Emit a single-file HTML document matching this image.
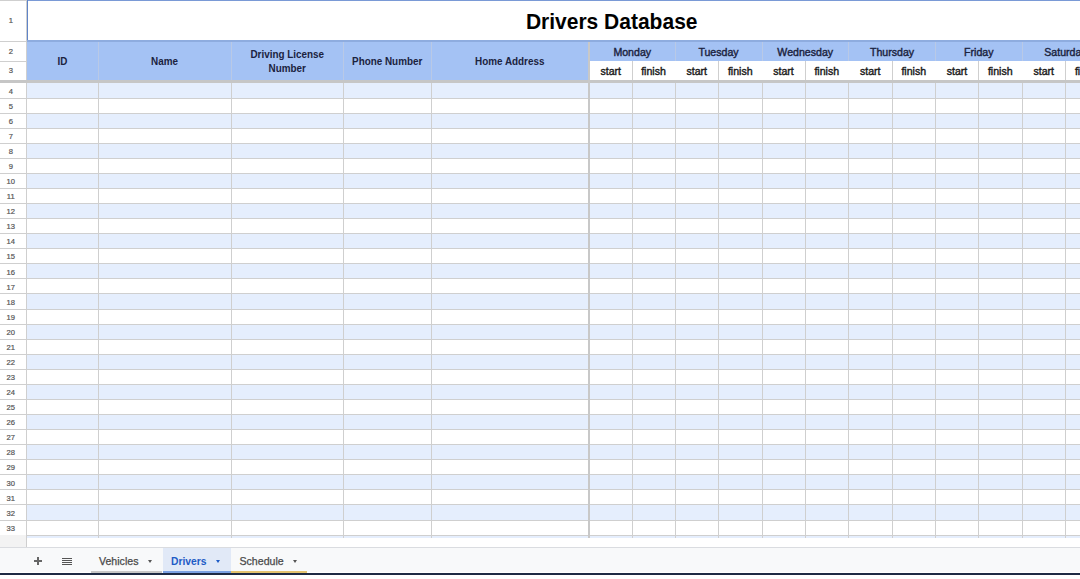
<!DOCTYPE html>
<html><head><meta charset="utf-8"><style>
html,body{margin:0;padding:0;}
body{width:1080px;height:579px;overflow:hidden;position:relative;background:#fff;font-family:"Liberation Sans", sans-serif;}
body>div{position:absolute;box-sizing:border-box;}
.t{white-space:nowrap;overflow:visible;}
</style></head><body>
<div style="left:27px;top:83px;width:1053px;height:15.07px;background:#e5eefd"></div>
<div style="left:27px;top:113.14px;width:1053px;height:15.07px;background:#e5eefd"></div>
<div style="left:27px;top:143.28px;width:1053px;height:15.07px;background:#e5eefd"></div>
<div style="left:27px;top:173.42px;width:1053px;height:15.07px;background:#e5eefd"></div>
<div style="left:27px;top:203.56px;width:1053px;height:15.07px;background:#e5eefd"></div>
<div style="left:27px;top:233.7px;width:1053px;height:15.07px;background:#e5eefd"></div>
<div style="left:27px;top:263.84px;width:1053px;height:15.07px;background:#e5eefd"></div>
<div style="left:27px;top:293.98px;width:1053px;height:15.07px;background:#e5eefd"></div>
<div style="left:27px;top:324.12px;width:1053px;height:15.07px;background:#e5eefd"></div>
<div style="left:27px;top:354.26px;width:1053px;height:15.07px;background:#e5eefd"></div>
<div style="left:27px;top:384.4px;width:1053px;height:15.07px;background:#e5eefd"></div>
<div style="left:27px;top:414.54px;width:1053px;height:15.07px;background:#e5eefd"></div>
<div style="left:27px;top:444.68px;width:1053px;height:15.07px;background:#e5eefd"></div>
<div style="left:27px;top:474.82px;width:1053px;height:15.07px;background:#e5eefd"></div>
<div style="left:27px;top:504.96px;width:1053px;height:15.07px;background:#e5eefd"></div>
<div style="left:27px;top:535.1px;width:1053px;height:3.2px;background:#e5eefd"></div>
<div style="left:0px;top:97.57px;width:1080px;height:1px;background:#cfcfcf"></div>
<div style="left:0px;top:112.64px;width:1080px;height:1px;background:#cfcfcf"></div>
<div style="left:0px;top:127.71px;width:1080px;height:1px;background:#cfcfcf"></div>
<div style="left:0px;top:142.78px;width:1080px;height:1px;background:#cfcfcf"></div>
<div style="left:0px;top:157.85px;width:1080px;height:1px;background:#cfcfcf"></div>
<div style="left:0px;top:172.92px;width:1080px;height:1px;background:#cfcfcf"></div>
<div style="left:0px;top:187.99px;width:1080px;height:1px;background:#cfcfcf"></div>
<div style="left:0px;top:203.06px;width:1080px;height:1px;background:#cfcfcf"></div>
<div style="left:0px;top:218.13px;width:1080px;height:1px;background:#cfcfcf"></div>
<div style="left:0px;top:233.2px;width:1080px;height:1px;background:#cfcfcf"></div>
<div style="left:0px;top:248.27px;width:1080px;height:1px;background:#cfcfcf"></div>
<div style="left:0px;top:263.34px;width:1080px;height:1px;background:#cfcfcf"></div>
<div style="left:0px;top:278.41px;width:1080px;height:1px;background:#cfcfcf"></div>
<div style="left:0px;top:293.48px;width:1080px;height:1px;background:#cfcfcf"></div>
<div style="left:0px;top:308.55px;width:1080px;height:1px;background:#cfcfcf"></div>
<div style="left:0px;top:323.62px;width:1080px;height:1px;background:#cfcfcf"></div>
<div style="left:0px;top:338.69px;width:1080px;height:1px;background:#cfcfcf"></div>
<div style="left:0px;top:353.76px;width:1080px;height:1px;background:#cfcfcf"></div>
<div style="left:0px;top:368.83px;width:1080px;height:1px;background:#cfcfcf"></div>
<div style="left:0px;top:383.9px;width:1080px;height:1px;background:#cfcfcf"></div>
<div style="left:0px;top:398.97px;width:1080px;height:1px;background:#cfcfcf"></div>
<div style="left:0px;top:414.04px;width:1080px;height:1px;background:#cfcfcf"></div>
<div style="left:0px;top:429.11px;width:1080px;height:1px;background:#cfcfcf"></div>
<div style="left:0px;top:444.18px;width:1080px;height:1px;background:#cfcfcf"></div>
<div style="left:0px;top:459.25px;width:1080px;height:1px;background:#cfcfcf"></div>
<div style="left:0px;top:474.32px;width:1080px;height:1px;background:#cfcfcf"></div>
<div style="left:0px;top:489.39px;width:1080px;height:1px;background:#cfcfcf"></div>
<div style="left:0px;top:504.46px;width:1080px;height:1px;background:#cfcfcf"></div>
<div style="left:0px;top:519.53px;width:1080px;height:1px;background:#cfcfcf"></div>
<div style="left:0px;top:534.6px;width:1080px;height:1px;background:#cfcfcf"></div>
<div style="left:97.5px;top:41px;width:1px;height:497.3px;background:#cfcfcf"></div>
<div style="left:230.5px;top:41px;width:1px;height:497.3px;background:#cfcfcf"></div>
<div style="left:342.9px;top:41px;width:1px;height:497.3px;background:#cfcfcf"></div>
<div style="left:430.5px;top:41px;width:1px;height:497.3px;background:#cfcfcf"></div>
<div style="left:631.5px;top:61px;width:1px;height:477.3px;background:#cfcfcf"></div>
<div style="left:674.5px;top:61px;width:1px;height:477.3px;background:#cfcfcf"></div>
<div style="left:718px;top:61px;width:1px;height:477.3px;background:#cfcfcf"></div>
<div style="left:761.5px;top:61px;width:1px;height:477.3px;background:#cfcfcf"></div>
<div style="left:804.5px;top:61px;width:1px;height:477.3px;background:#cfcfcf"></div>
<div style="left:848px;top:61px;width:1px;height:477.3px;background:#cfcfcf"></div>
<div style="left:891.5px;top:61px;width:1px;height:477.3px;background:#cfcfcf"></div>
<div style="left:935px;top:61px;width:1px;height:477.3px;background:#cfcfcf"></div>
<div style="left:978px;top:61px;width:1px;height:477.3px;background:#cfcfcf"></div>
<div style="left:1021.5px;top:61px;width:1px;height:477.3px;background:#cfcfcf"></div>
<div style="left:1065px;top:61px;width:1px;height:477.3px;background:#cfcfcf"></div>
<div style="left:0px;top:538.3px;width:1080px;height:8.7px;background:#fff"></div>
<div style="left:0px;top:535px;width:26px;height:12px;background:#f3f3f3"></div>
<div style="left:26px;top:0px;width:1px;height:547px;background:#cfcfcf"></div>
<div style="left:27px;top:41px;width:561.5px;height:39px;background:#a4c2f4"></div>
<div style="left:590px;top:41px;width:490px;height:20px;background:#a4c2f4"></div>
<div style="left:590px;top:61px;width:490px;height:19px;background:#fff"></div>
<div style="left:97.5px;top:41px;width:1px;height:39px;background:#b9c9e6"></div>
<div style="left:230.5px;top:41px;width:1px;height:39px;background:#b9c9e6"></div>
<div style="left:342.9px;top:41px;width:1px;height:39px;background:#b9c9e6"></div>
<div style="left:430.5px;top:41px;width:1px;height:39px;background:#b9c9e6"></div>
<div style="left:674.5px;top:41px;width:1px;height:20px;background:#b9c9e6"></div>
<div style="left:761.5px;top:41px;width:1px;height:20px;background:#b9c9e6"></div>
<div style="left:848px;top:41px;width:1px;height:20px;background:#b9c9e6"></div>
<div style="left:935px;top:41px;width:1px;height:20px;background:#b9c9e6"></div>
<div style="left:1021.5px;top:41px;width:1px;height:20px;background:#b9c9e6"></div>
<div style="left:631.5px;top:61px;width:1px;height:19px;background:#cfcfcf"></div>
<div style="left:718px;top:61px;width:1px;height:19px;background:#cfcfcf"></div>
<div style="left:804.5px;top:61px;width:1px;height:19px;background:#cfcfcf"></div>
<div style="left:891.5px;top:61px;width:1px;height:19px;background:#cfcfcf"></div>
<div style="left:978px;top:61px;width:1px;height:19px;background:#cfcfcf"></div>
<div style="left:1065px;top:61px;width:1px;height:19px;background:#cfcfcf"></div>
<div style="left:0px;top:80px;width:1080px;height:3.4px;background:#c6c6c6"></div>
<div style="left:588px;top:41px;width:2px;height:497.3px;background:#c8c8c8"></div>
<div style="left:27px;top:0px;width:1053px;height:1px;background:#7a9ad6"></div>
<div style="left:26.5px;top:0px;width:1.5px;height:41px;background:#5f84c8"></div>
<div style="left:27px;top:40px;width:1053px;height:2px;background:#8eacdf"></div>
<div style="left:0px;top:0px;width:27px;height:1px;background:#cfcfcf"></div>
<div style="left:0px;top:41px;width:27px;height:1px;background:#cfcfcf"></div>
<div style="left:0px;top:61px;width:27px;height:1px;background:#cfcfcf"></div>
<div class="t" style="left:27px;top:4px;width:1169.4px;height:34px;line-height:34px;font-weight:700;font-size:21px;color:#000;text-align:center;transform:scaleY(1.08)">Drivers Database</div>
<div class="t" style="left:27px;top:42px;width:71px;height:39px;line-height:39px;font-weight:700;font-size:9.9px;color:#1b2340;text-align:center;transform:scaleY(1.12)">ID</div>
<div class="t" style="left:98px;top:42px;width:133px;height:39px;line-height:39px;font-weight:700;font-size:9.9px;color:#1b2340;text-align:center;transform:scaleY(1.12)">Name</div>
<div class="t" style="left:231px;top:48px;width:112.4px;height:13px;line-height:13px;font-weight:700;font-size:9.9px;color:#1b2340;text-align:center;transform:scaleY(1.12)">Driving License</div>
<div class="t" style="left:231px;top:62px;width:112.4px;height:13px;line-height:13px;font-weight:700;font-size:9.9px;color:#1b2340;text-align:center;transform:scaleY(1.12)">Number</div>
<div class="t" style="left:343.4px;top:42px;width:87.6px;height:39px;line-height:39px;font-weight:700;font-size:9.9px;color:#1b2340;text-align:center;transform:scaleY(1.12)">Phone Number</div>
<div class="t" style="left:431px;top:42px;width:157.5px;height:39px;line-height:39px;font-weight:700;font-size:9.9px;color:#1b2340;text-align:center;transform:scaleY(1.12)">Home Address</div>
<div class="t" style="left:589.5px;top:41.7px;width:85.5px;height:20px;line-height:20px;font-size:10.6px;color:#1b2340;text-align:center;-webkit-text-stroke:0.4px #1b2340">Monday</div>
<div class="t" style="left:589.5px;top:61.5px;width:42.5px;height:19px;line-height:19px;font-size:10.6px;color:#1a1a1a;text-align:center;-webkit-text-stroke:0.4px #1a1a1a">start</div>
<div class="t" style="left:632px;top:61.5px;width:43px;height:19px;line-height:19px;font-size:10.6px;color:#1a1a1a;text-align:center;-webkit-text-stroke:0.4px #1a1a1a">finish</div>
<div class="t" style="left:675px;top:41.7px;width:87px;height:20px;line-height:20px;font-size:10.6px;color:#1b2340;text-align:center;-webkit-text-stroke:0.4px #1b2340">Tuesday</div>
<div class="t" style="left:675px;top:61.5px;width:43.5px;height:19px;line-height:19px;font-size:10.6px;color:#1a1a1a;text-align:center;-webkit-text-stroke:0.4px #1a1a1a">start</div>
<div class="t" style="left:718.5px;top:61.5px;width:43.5px;height:19px;line-height:19px;font-size:10.6px;color:#1a1a1a;text-align:center;-webkit-text-stroke:0.4px #1a1a1a">finish</div>
<div class="t" style="left:762px;top:41.7px;width:86.5px;height:20px;line-height:20px;font-size:10.6px;color:#1b2340;text-align:center;-webkit-text-stroke:0.4px #1b2340">Wednesday</div>
<div class="t" style="left:762px;top:61.5px;width:43px;height:19px;line-height:19px;font-size:10.6px;color:#1a1a1a;text-align:center;-webkit-text-stroke:0.4px #1a1a1a">start</div>
<div class="t" style="left:805px;top:61.5px;width:43.5px;height:19px;line-height:19px;font-size:10.6px;color:#1a1a1a;text-align:center;-webkit-text-stroke:0.4px #1a1a1a">finish</div>
<div class="t" style="left:848.5px;top:41.7px;width:87px;height:20px;line-height:20px;font-size:10.6px;color:#1b2340;text-align:center;-webkit-text-stroke:0.4px #1b2340">Thursday</div>
<div class="t" style="left:848.5px;top:61.5px;width:43.5px;height:19px;line-height:19px;font-size:10.6px;color:#1a1a1a;text-align:center;-webkit-text-stroke:0.4px #1a1a1a">start</div>
<div class="t" style="left:892px;top:61.5px;width:43.5px;height:19px;line-height:19px;font-size:10.6px;color:#1a1a1a;text-align:center;-webkit-text-stroke:0.4px #1a1a1a">finish</div>
<div class="t" style="left:935.5px;top:41.7px;width:86.5px;height:20px;line-height:20px;font-size:10.6px;color:#1b2340;text-align:center;-webkit-text-stroke:0.4px #1b2340">Friday</div>
<div class="t" style="left:935.5px;top:61.5px;width:43px;height:19px;line-height:19px;font-size:10.6px;color:#1a1a1a;text-align:center;-webkit-text-stroke:0.4px #1a1a1a">start</div>
<div class="t" style="left:978.5px;top:61.5px;width:43.5px;height:19px;line-height:19px;font-size:10.6px;color:#1a1a1a;text-align:center;-webkit-text-stroke:0.4px #1a1a1a">finish</div>
<div class="t" style="left:1022px;top:41.7px;width:87px;height:20px;line-height:20px;font-size:10.6px;color:#1b2340;text-align:center;-webkit-text-stroke:0.4px #1b2340">Saturday</div>
<div class="t" style="left:1022px;top:61.5px;width:43.5px;height:19px;line-height:19px;font-size:10.6px;color:#1a1a1a;text-align:center;-webkit-text-stroke:0.4px #1a1a1a">start</div>
<div class="t" style="left:1065.5px;top:61.5px;width:43.5px;height:19px;line-height:19px;font-size:10.6px;color:#1a1a1a;text-align:center;-webkit-text-stroke:0.4px #1a1a1a">finish</div>
<div class="t" style="left:0px;top:0px;width:21.5px;height:41px;line-height:41px;font-size:7.6px;color:#555;-webkit-text-stroke:0.2px #555;text-align:center">1</div>
<div class="t" style="left:0px;top:42.2px;width:21.5px;height:20px;line-height:20px;font-size:7.6px;color:#555;-webkit-text-stroke:0.2px #555;text-align:center">2</div>
<div class="t" style="left:0px;top:60.7px;width:21.5px;height:19px;line-height:19px;font-size:7.6px;color:#555;-webkit-text-stroke:0.2px #555;text-align:center">3</div>
<div class="t" style="left:0px;top:83.7px;width:21.5px;height:15.07px;line-height:15.07px;font-size:7.6px;color:#555;-webkit-text-stroke:0.2px #555;text-align:center">4</div>
<div class="t" style="left:0px;top:98.77px;width:21.5px;height:15.07px;line-height:15.07px;font-size:7.6px;color:#555;-webkit-text-stroke:0.2px #555;text-align:center">5</div>
<div class="t" style="left:0px;top:113.84px;width:21.5px;height:15.07px;line-height:15.07px;font-size:7.6px;color:#555;-webkit-text-stroke:0.2px #555;text-align:center">6</div>
<div class="t" style="left:0px;top:128.91px;width:21.5px;height:15.07px;line-height:15.07px;font-size:7.6px;color:#555;-webkit-text-stroke:0.2px #555;text-align:center">7</div>
<div class="t" style="left:0px;top:143.98px;width:21.5px;height:15.07px;line-height:15.07px;font-size:7.6px;color:#555;-webkit-text-stroke:0.2px #555;text-align:center">8</div>
<div class="t" style="left:0px;top:159.05px;width:21.5px;height:15.07px;line-height:15.07px;font-size:7.6px;color:#555;-webkit-text-stroke:0.2px #555;text-align:center">9</div>
<div class="t" style="left:0px;top:174.12px;width:21.5px;height:15.07px;line-height:15.07px;font-size:7.6px;color:#555;-webkit-text-stroke:0.2px #555;text-align:center">10</div>
<div class="t" style="left:0px;top:189.19px;width:21.5px;height:15.07px;line-height:15.07px;font-size:7.6px;color:#555;-webkit-text-stroke:0.2px #555;text-align:center">11</div>
<div class="t" style="left:0px;top:204.26px;width:21.5px;height:15.07px;line-height:15.07px;font-size:7.6px;color:#555;-webkit-text-stroke:0.2px #555;text-align:center">12</div>
<div class="t" style="left:0px;top:219.33px;width:21.5px;height:15.07px;line-height:15.07px;font-size:7.6px;color:#555;-webkit-text-stroke:0.2px #555;text-align:center">13</div>
<div class="t" style="left:0px;top:234.4px;width:21.5px;height:15.07px;line-height:15.07px;font-size:7.6px;color:#555;-webkit-text-stroke:0.2px #555;text-align:center">14</div>
<div class="t" style="left:0px;top:249.47px;width:21.5px;height:15.07px;line-height:15.07px;font-size:7.6px;color:#555;-webkit-text-stroke:0.2px #555;text-align:center">15</div>
<div class="t" style="left:0px;top:264.54px;width:21.5px;height:15.07px;line-height:15.07px;font-size:7.6px;color:#555;-webkit-text-stroke:0.2px #555;text-align:center">16</div>
<div class="t" style="left:0px;top:279.61px;width:21.5px;height:15.07px;line-height:15.07px;font-size:7.6px;color:#555;-webkit-text-stroke:0.2px #555;text-align:center">17</div>
<div class="t" style="left:0px;top:294.68px;width:21.5px;height:15.07px;line-height:15.07px;font-size:7.6px;color:#555;-webkit-text-stroke:0.2px #555;text-align:center">18</div>
<div class="t" style="left:0px;top:309.75px;width:21.5px;height:15.07px;line-height:15.07px;font-size:7.6px;color:#555;-webkit-text-stroke:0.2px #555;text-align:center">19</div>
<div class="t" style="left:0px;top:324.82px;width:21.5px;height:15.07px;line-height:15.07px;font-size:7.6px;color:#555;-webkit-text-stroke:0.2px #555;text-align:center">20</div>
<div class="t" style="left:0px;top:339.89px;width:21.5px;height:15.07px;line-height:15.07px;font-size:7.6px;color:#555;-webkit-text-stroke:0.2px #555;text-align:center">21</div>
<div class="t" style="left:0px;top:354.96px;width:21.5px;height:15.07px;line-height:15.07px;font-size:7.6px;color:#555;-webkit-text-stroke:0.2px #555;text-align:center">22</div>
<div class="t" style="left:0px;top:370.03px;width:21.5px;height:15.07px;line-height:15.07px;font-size:7.6px;color:#555;-webkit-text-stroke:0.2px #555;text-align:center">23</div>
<div class="t" style="left:0px;top:385.1px;width:21.5px;height:15.07px;line-height:15.07px;font-size:7.6px;color:#555;-webkit-text-stroke:0.2px #555;text-align:center">24</div>
<div class="t" style="left:0px;top:400.17px;width:21.5px;height:15.07px;line-height:15.07px;font-size:7.6px;color:#555;-webkit-text-stroke:0.2px #555;text-align:center">25</div>
<div class="t" style="left:0px;top:415.24px;width:21.5px;height:15.07px;line-height:15.07px;font-size:7.6px;color:#555;-webkit-text-stroke:0.2px #555;text-align:center">26</div>
<div class="t" style="left:0px;top:430.31px;width:21.5px;height:15.07px;line-height:15.07px;font-size:7.6px;color:#555;-webkit-text-stroke:0.2px #555;text-align:center">27</div>
<div class="t" style="left:0px;top:445.38px;width:21.5px;height:15.07px;line-height:15.07px;font-size:7.6px;color:#555;-webkit-text-stroke:0.2px #555;text-align:center">28</div>
<div class="t" style="left:0px;top:460.45px;width:21.5px;height:15.07px;line-height:15.07px;font-size:7.6px;color:#555;-webkit-text-stroke:0.2px #555;text-align:center">29</div>
<div class="t" style="left:0px;top:475.52px;width:21.5px;height:15.07px;line-height:15.07px;font-size:7.6px;color:#555;-webkit-text-stroke:0.2px #555;text-align:center">30</div>
<div class="t" style="left:0px;top:490.59px;width:21.5px;height:15.07px;line-height:15.07px;font-size:7.6px;color:#555;-webkit-text-stroke:0.2px #555;text-align:center">31</div>
<div class="t" style="left:0px;top:505.66px;width:21.5px;height:15.07px;line-height:15.07px;font-size:7.6px;color:#555;-webkit-text-stroke:0.2px #555;text-align:center">32</div>
<div class="t" style="left:0px;top:520.73px;width:21.5px;height:15.07px;line-height:15.07px;font-size:7.6px;color:#555;-webkit-text-stroke:0.2px #555;text-align:center">33</div>
<div style="left:0px;top:547px;width:1080px;height:1px;background:#dadce0"></div>
<div style="left:0px;top:548px;width:1080px;height:24px;background:#f8f9fa"></div>
<div style="left:163px;top:548px;width:67.5px;height:23px;background:#e1e9f7"></div>
<div style="left:91px;top:571px;width:71px;height:1.5px;background:#c7c7c7"></div>
<div style="left:163px;top:571px;width:67.5px;height:2.3px;background:#7aa0e2"></div>
<div style="left:230.6px;top:571px;width:76.3px;height:2.3px;background:#e3c26e"></div>
<div style="left:0px;top:573.3px;width:1080px;height:1.8px;background:#1e2a44"></div>
<div style="left:0px;top:575px;width:1080px;height:4px;background:#fff"></div>
<div style="left:34.4px;top:560.3px;width:7.2px;height:1.3px;background:#666"></div>
<div style="left:37.3px;top:557px;width:1.3px;height:7.6px;background:#666"></div>
<div style="left:61.7px;top:558px;width:10.2px;height:1.1px;background:#555"></div>
<div style="left:61.7px;top:560.1px;width:10.2px;height:1.1px;background:#555"></div>
<div style="left:61.7px;top:562.2px;width:10.2px;height:1.1px;background:#555"></div>
<div style="left:61.7px;top:564.3px;width:10.2px;height:1.1px;background:#555"></div>
<div class="t" style="left:91px;top:549.2px;width:72px;height:24px;line-height:24px;font-size:10.6px;color:#4a4a4a;-webkit-text-stroke:0.25px #4a4a4a;padding-left:8px;text-align:left">Vehicles</div>
<div class="t" style="left:163px;top:550px;width:68px;height:24px;line-height:24px;font-size:10.3px;font-weight:700;color:#1d5bc6;padding-left:8px;text-align:left">Drivers</div>
<div class="t" style="left:231px;top:549.2px;width:76px;height:24px;line-height:24px;font-size:10.6px;color:#4a4a4a;-webkit-text-stroke:0.25px #4a4a4a;padding-left:8.5px;text-align:left">Schedule</div>
<div style="left:148.2px;top:560px;width:0;height:0;border-left:2.8px solid transparent;border-right:2.8px solid transparent;border-top:3.3px solid #555"></div>
<div style="left:216.3px;top:560px;width:0;height:0;border-left:2.8px solid transparent;border-right:2.8px solid transparent;border-top:3.3px solid #1d5bc6"></div>
<div style="left:293.3px;top:560px;width:0;height:0;border-left:2.8px solid transparent;border-right:2.8px solid transparent;border-top:3.3px solid #555"></div>
</body></html>
